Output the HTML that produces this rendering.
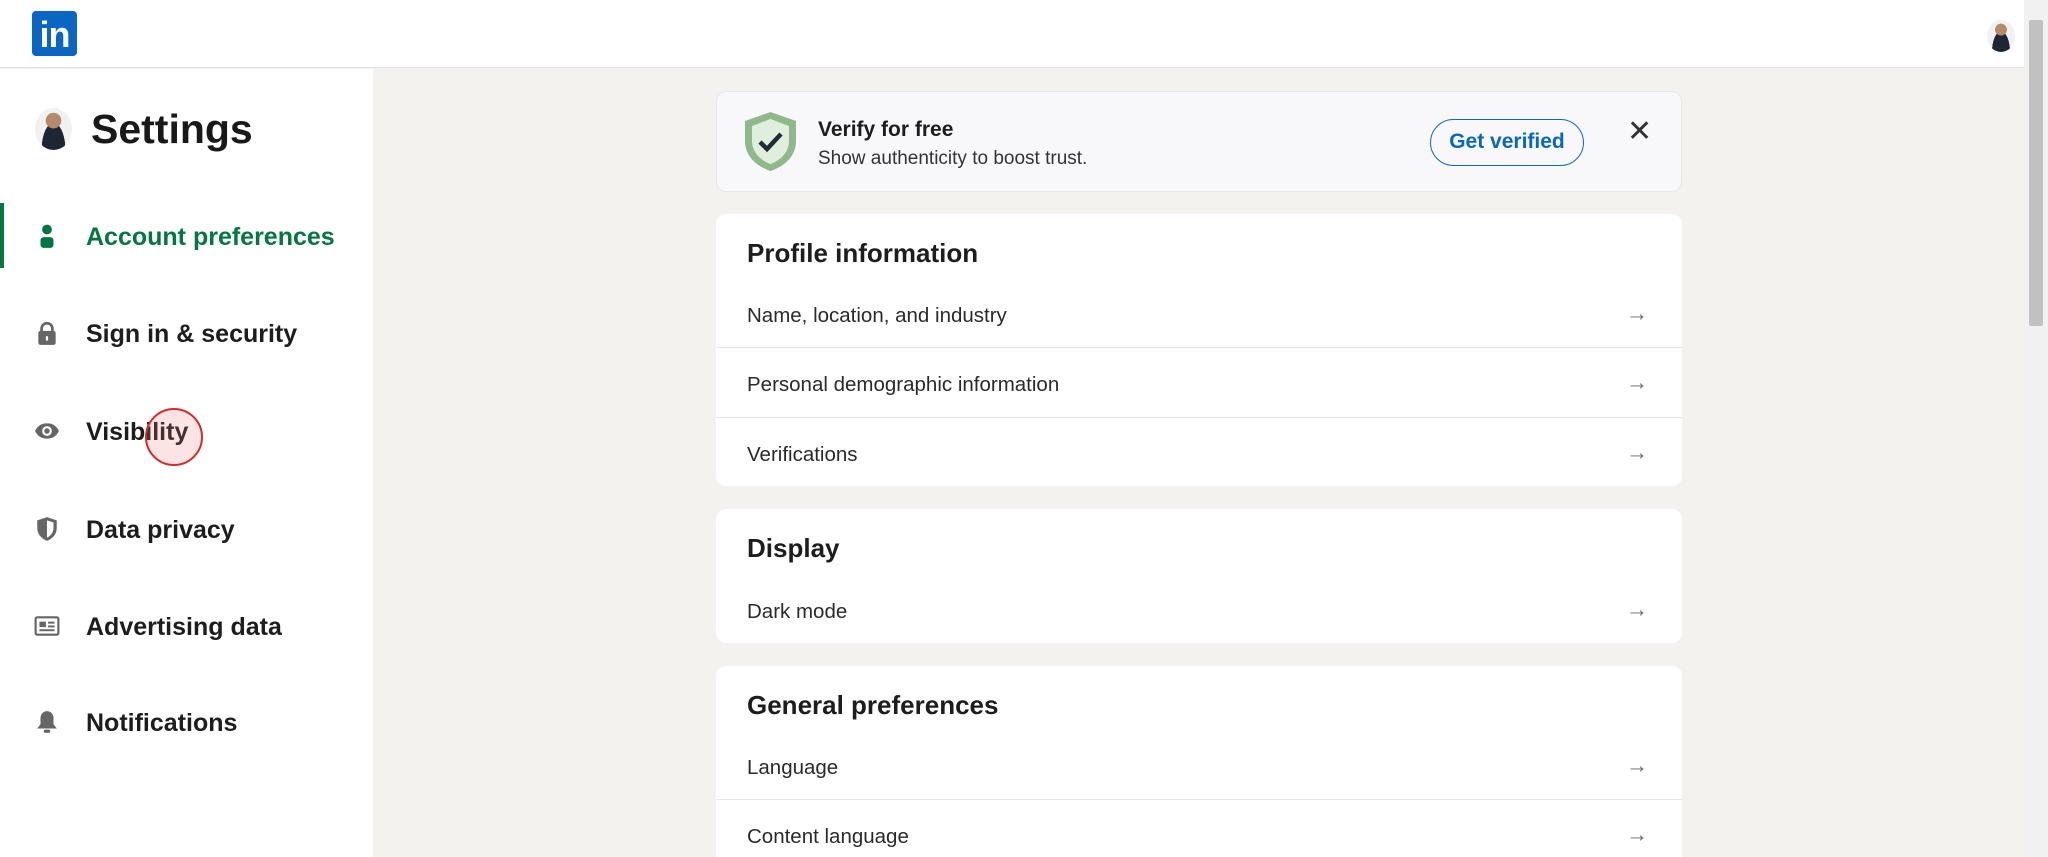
<!DOCTYPE html>
<html style="overflow:hidden;height:857px"><head><meta charset="utf-8"><style>
*{box-sizing:border-box;margin:0;padding:0}
body{width:2048px;height:857px;overflow:hidden;background:#f4f2ee;font-family:"Liberation Sans",sans-serif;color:#1d1d1d;position:relative}
.hdr{position:absolute;left:0;top:0;width:2024px;height:68px;background:#fff;border-bottom:1px solid #e3e3e3}
.logo{position:absolute;left:32px;top:11px;width:45px;height:45px;background:#0a66c2;border-radius:4px;color:#fff;font-weight:bold;font-size:36px;line-height:48px;text-align:center;letter-spacing:-1px}
.side{position:absolute;left:0;top:69px;width:373px;height:788px;background:#fff}
.av{position:absolute;border-radius:50%;background:radial-gradient(circle at 50% 30%,#b58a6a 0 22%,transparent 23%),radial-gradient(ellipse at 50% 100%,#1e2535 0 45%,transparent 46%),#f1f1f1}
.title{position:absolute;left:91px;font-size:41px;font-weight:bold;color:#191919}
.nav{position:absolute;left:86px;font-size:25px;font-weight:bold;color:#1d1d1d}
.ic{position:absolute;left:34px;width:26px;height:26px}
.card{position:absolute;left:716px;width:966px;background:#fff;border-radius:10px}
.h{position:absolute;left:31px;font-size:26px;font-weight:bold;color:#1d1d1d}
.row{position:absolute;left:0;width:100%;height:69px;font-size:20.5px;color:#2a2a2a}
.row span{position:absolute;left:31px;top:50%;transform:translateY(-50%)}
.row i{position:absolute;right:34px;top:50%;transform:translateY(-60%);font-style:normal;font-size:22px;color:#666}
.div{position:absolute;left:0;width:100%;height:1px;background:#e6e6e6}
</style></head><body>
<div class="hdr"><div class="logo">in</div>
<div class="av" style="left:1987px;top:20px;width:28px;height:32px"></div></div>
<div class="side">
<div class="av" style="left:35px;top:39px;width:37px;height:42px"></div>
<div class="title" style="top:37px">Settings</div>
<div style="position:absolute;left:0;top:134px;width:4px;height:65px;background:#057642"></div>
<svg class="ic" style="top:154px" viewBox="0 0 24 24"><circle cx="12" cy="6" r="4.5" fill="#057642"/><rect x="6" y="13" width="12" height="10" rx="3" fill="#057642"/></svg>
<div class="nav" style="top:154px;color:#057642">Account preferences</div>
<svg class="ic" style="top:251px" viewBox="0 0 24 24"><path d="M7 11V8a5 5 0 0 1 10 0v3" stroke="#666" stroke-width="2.5" fill="none"/><rect x="4" y="10" width="16" height="13" rx="2" fill="#666"/><rect x="11" y="15" width="2" height="4" fill="#fff"/></svg>
<div class="nav" style="top:251px">Sign in &amp; security</div>
<svg class="ic" style="top:349px" viewBox="0 0 24 24"><path d="M1 12C4 6 8 5 12 5s8 1 11 7c-3 6-7 7-11 7S4 18 1 12z" fill="#666"/><circle cx="12" cy="12" r="4.5" fill="#fff"/><circle cx="12" cy="12" r="2.5" fill="#666"/></svg>
<div class="nav" style="top:349px">Visibility</div>
<svg class="ic" style="top:447px" viewBox="0 0 24 24"><path d="M12 1L3 4v7c0 6 4 10 9 12 5-2 9-6 9-12V4z" fill="#666"/><path d="M12 4v16c3-1.5 6-4.5 6-9V6z" fill="#fff"/></svg>
<div class="nav" style="top:447px">Data privacy</div>
<svg class="ic" style="top:544px" viewBox="0 0 24 24"><rect x="1.5" y="4" width="21" height="16" rx="1.5" fill="none" stroke="#666" stroke-width="2"/><rect x="5" y="8" width="6" height="5" fill="#666"/><rect x="13" y="8" width="6" height="1.8" fill="#666"/><rect x="13" y="11.5" width="6" height="1.8" fill="#666"/><rect x="5" y="15" width="14" height="1.8" fill="#666"/></svg>
<div class="nav" style="top:544px">Advertising data</div>
<svg class="ic" style="top:640px" viewBox="0 0 24 24"><path d="M12 2a6 6 0 0 0-6 6v6l-3 4h18l-3-4V8a6 6 0 0 0-6-6z" fill="#666"/><rect x="9" y="19" width="6" height="3" rx="1.5" fill="#666"/></svg>
<div class="nav" style="top:640px">Notifications</div>
<div style="position:absolute;left:145px;top:339px;width:58px;height:58px;border-radius:50%;border:2px solid #d42a2a;background:rgba(240,120,120,.2)"></div>
</div>

<div class="card" style="top:91px;height:101px;background:#f8f8fa;border:1px solid #e8e8e8">
<svg style="position:absolute;left:26px;top:19px" width="55" height="61" viewBox="0 0 55 61"><path d="M27.5 1L2 10v20c0 15 11 25 25.5 30C42 55 53 45 53 30V10z" fill="#8fb98a"/><path d="M27.5 8L9 15v15c0 11 8 19 18.5 23C38 49 46 41 46 30V15z" fill="#dfeedd"/><path d="M17 31l7 7 14-15" stroke="#1f2c33" stroke-width="4.5" fill="none"/></svg>
<div style="position:absolute;left:101px;top:26px;font-size:21px;font-weight:bold">Verify for free</div>
<div style="position:absolute;left:101px;top:56px;font-size:19px;color:#333">Show authenticity to boost trust.</div>
<div style="position:absolute;left:713px;top:27px;width:154px;height:47px;border:1.5px solid #0a66c2;border-radius:24px;color:#0a66c2;font-size:21px;font-weight:bold;text-align:center;line-height:44px">Get verified</div>
<div style="position:absolute;left:910px;top:22px;font-size:30px;color:#333">✕</div>
</div>

<div class="card" style="top:214px;height:272px">
<div class="h" style="top:24px">Profile information</div>
<div class="row" style="top:67px"><span>Name, location, and industry</span><i>→</i></div>
<div class="div" style="top:133px"></div>
<div class="row" style="top:136px"><span>Personal demographic information</span><i>→</i></div>
<div class="div" style="top:203px"></div>
<div class="row" style="top:206px"><span>Verifications</span><i>→</i></div>
</div>

<div class="card" style="top:509px;height:134px">
<div class="h" style="top:24px">Display</div>
<div class="row" style="top:68px"><span>Dark mode</span><i>→</i></div>
</div>

<div class="card" style="top:666px;height:191px;border-radius:10px 10px 0 0">
<div class="h" style="top:24px">General preferences</div>
<div class="row" style="top:67px"><span>Language</span><i>→</i></div>
<div class="div" style="top:133px"></div>
<div class="row" style="top:136px"><span>Content language</span><i>→</i></div>
</div>

<div style="position:absolute;left:2024px;top:0;width:24px;height:857px;background:#f1f1f1"></div>
<div style="position:absolute;left:2029px;top:20px;width:14px;height:306px;background:#c1c1c1;border-radius:2px"></div>
</body></html>
